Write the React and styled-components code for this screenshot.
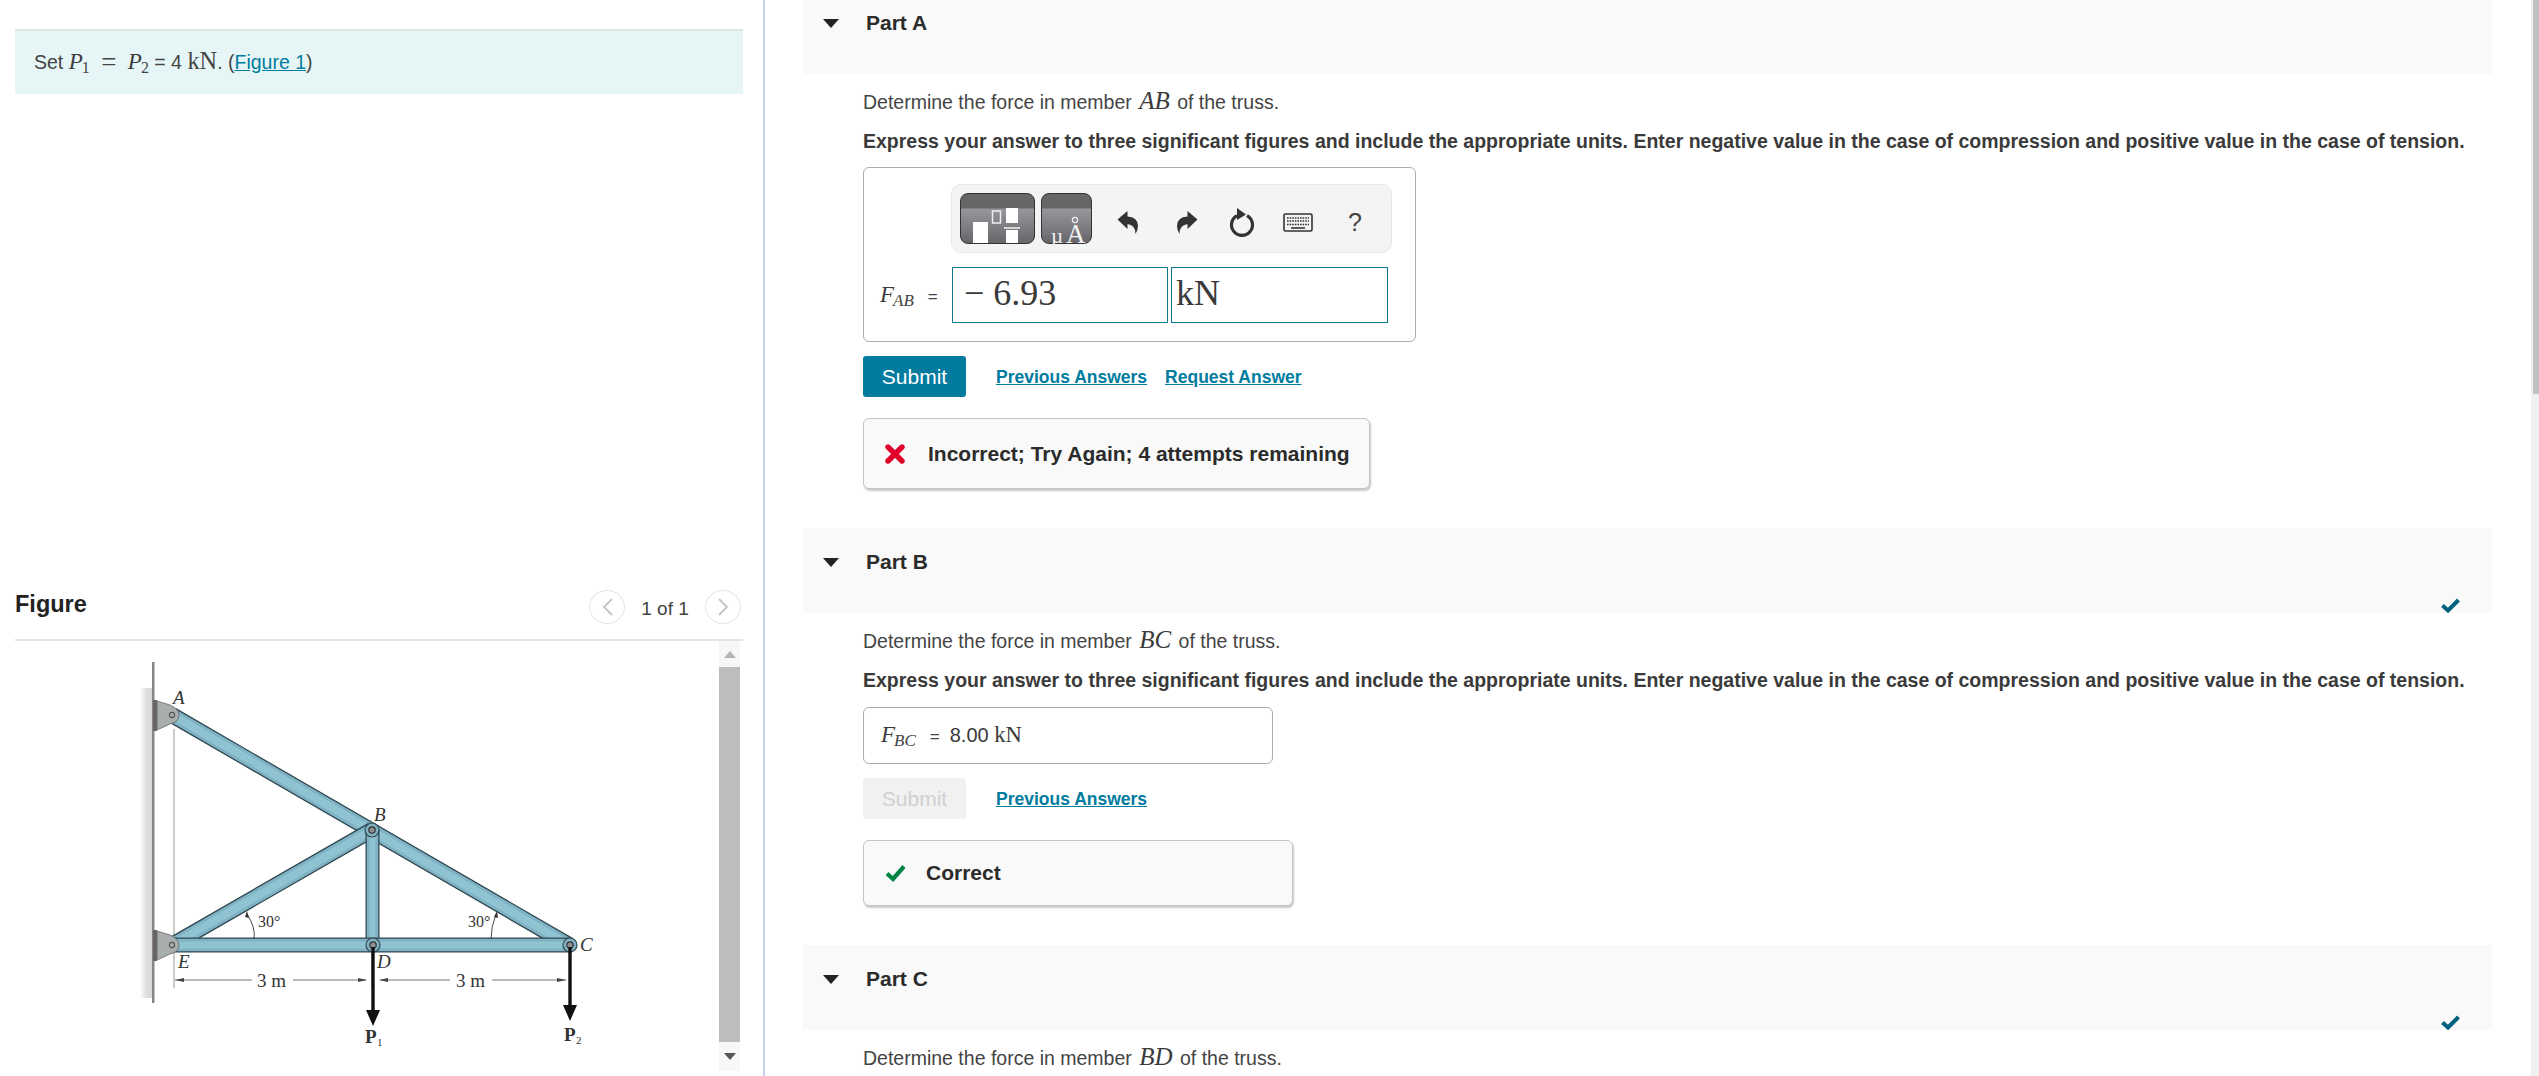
import React from "react";
import styled, { createGlobalStyle } from "styled-components";

const GlobalStyle = createGlobalStyle`
  html, body {
    margin: 0;
    padding: 0;
    background: #fff;
    font-family: "Liberation Sans", Arial, sans-serif;
    color: #3b3b3b;
  }
`;

const PROMPT =
  "Express your answer to three significant figures and include the appropriate units. Enter negative value in the case of compression and positive value in the case of tension.";

const Member = ({ x1, y1, x2, y2, w = 14 }) => (
  <g strokeLinecap="butt">
    <line x1={x1} y1={y1} x2={x2} y2={y2} stroke="#2f4650" strokeWidth={w} />
    <line x1={x1} y1={y1} x2={x2} y2={y2} stroke="#7fb2c2" strokeWidth={w - 2.5} />
    <line x1={x1} y1={y1} x2={x2} y2={y2} stroke="#8fc3d1" strokeWidth={w - 8} />
  </g>
);

const Pin = ({ x, y }) => (
  <g>
    <circle cx={x} cy={y} r="7" fill="#7fb2c2" stroke="#2f4650" strokeWidth="1.2" />
    <circle cx={x} cy={y} r="3.2" fill="#8b8f90" stroke="#333" strokeWidth="1.2" />
  </g>
);

const Plate = ({ y }) => (
  <g>
    <rect x="153" y={y - 15} width="4" height="31" fill="#666" />
    <path
      d={`M157 ${y - 14} L170 ${y - 10} Q179 ${y - 6} 179 ${y} Q179 ${y + 7} 170 ${y + 9} L157 ${y + 15} Z`}
      fill="#a8aeae"
      stroke="#666"
      strokeWidth="0.8"
    />
    <circle cx="172" cy={y} r="2.6" fill="#a8aeae" stroke="#555" strokeWidth="1.1" />
  </g>
);

const Force = ({ x, tip }) => (
  <g>
    <line x1={x} y1="944" x2={x} y2={tip - 12} stroke="#111" strokeWidth="3.4" />
    <polygon points={`${x - 7},${tip - 16} ${x + 7},${tip - 16} ${x},${tip}`} fill="#111" />
  </g>
);

const TickArrow = ({ x1, x2 }) => (
  <line x1={x1} y1="977" x2={x2} y2="977" stroke="#666" strokeWidth="0.9" />
);

const TrussText = styled.text`
  font-family: "Liberation Serif", "Times New Roman", serif;
  font-size: ${(p) => p.$size || 19}px;
  font-style: ${(p) => (p.$upright ? "normal" : "italic")};
  font-weight: ${(p) => (p.$bold ? 700 : 400)};
  fill: #333;
`;

const TrussFigure = () => (
  <FigureSvg viewBox="15 638 704 430" width="704" height="430">
    <defs>
      <linearGradient id="wallShade" x1="0" x2="1" y1="0" y2="0">
        <stop offset="0" stopColor="#fff" />
        <stop offset="0.5" stopColor="#dedede" />
        <stop offset="1" stopColor="#d8d8d8" />
      </linearGradient>
    </defs>
    <rect x="140" y="685" width="12" height="310" fill="url(#wallShade)" />
    <rect x="152" y="659" width="2.5" height="341" fill="#868686" />
    <line x1="174" y1="726" x2="174" y2="985" stroke="#999" strokeWidth="1" />
    <line x1="372" y1="950" x2="372" y2="985" stroke="#999" strokeWidth="1" />

    <Member x1={172} y1={712} x2={569} y2={942} w={16} />
    <Member x1={172} y1={942} x2={372} y2={827} w={16} />
    <Member x1={372.5} y1={827} x2={372.5} y2={942} w={14} />
    <Member x1={172} y1={942} x2={572} y2={942} w={15} />
    <Plate y={712} />
    <Plate y={942} />
    <Pin x={372} y={827} />
    <Pin x={373} y={942} />
    <Pin x={570} y={942} />

    <path d="M247 911 Q256 925 254 936" fill="none" stroke="#333" strokeWidth="0.9" />
    <path d="M491 936 Q491 924 496 911" fill="none" stroke="#333" strokeWidth="0.9" />
    <polygon points="247,908 249,915 245,914" fill="#333" />
    <polygon points="497,908 498,915 494,914" fill="#333" />

    <TickArrow x1={175} x2={252} />
    <TickArrow x1={293} x2={366} />
    <TickArrow x1={380} x2={450} />
    <TickArrow x1={492} x2={566} />
    <polygon points="175,977 184,975 184,979" fill="#444" />
    <polygon points="367,977 358,975 358,979" fill="#444" />
    <polygon points="379,977 388,975 388,979" fill="#444" />
    <polygon points="566,977 557,975 557,979" fill="#444" />

    <Force x={373} tip={1023} />
    <Force x={570} tip={1018} />

    <TrussText x="173" y="701">A</TrussText>
    <TrussText x="374" y="818">B</TrussText>
    <TrussText x="580" y="948">C</TrussText>
    <TrussText x="178" y="965">E</TrussText>
    <TrussText x="377" y="965">D</TrussText>
    <TrussText x="258" y="924" $upright $size={16}>30°</TrussText>
    <TrussText x="468" y="924" $upright $size={16}>30°</TrussText>
    <TrussText x="257" y="984" $upright>3 m</TrussText>
    <TrussText x="456" y="984" $upright>3 m</TrussText>
    <TrussText x="365" y="1040" $upright $bold>P</TrussText>
    <TrussText x="377" y="1043" $upright $size={11}>1</TrussText>
    <TrussText x="564" y="1038" $upright $bold>P</TrussText>
    <TrussText x="576" y="1041" $upright $size={11}>2</TrussText>
  </FigureSvg>
);

const UndoIcon = ({ flip }) => (
  <ToolIcon width="22" height="24" viewBox="0 0 22 24" $flip={flip}>
    <path d="M0.5 9.5 L10.5 1 L10.5 6.5 Q21 7 21 16 Q21 20 18.5 24 Q19 15.5 10.5 14 L10.5 19 Z" fill="#333" />
  </ToolIcon>
);

const ReloadIcon = () => (
  <ToolIcon width="26" height="30" viewBox="0 0 26 30">
    <path d="M8 8.6 A10.5 10.5 0 1 0 18 8.6" fill="none" stroke="#333" strokeWidth="3.2" />
    <polygon points="8,1 17,7.5 8,13" fill="#333" />
  </ToolIcon>
);

const KeyboardIcon = () => (
  <ToolIcon width="30" height="19" viewBox="0 0 30 19">
    <rect x="1" y="1" width="28" height="17" rx="1.5" fill="#f4f4f4" stroke="#333" strokeWidth="1.6" />
    <path d="M4 5h22M4 8h22M4 11.5h22" stroke="#333" strokeWidth="1.7" strokeDasharray="1.6 1" />
    <path d="M8 15h14" stroke="#333" strokeWidth="1.6" />
  </ToolIcon>
);

const TemplateGlyph = () => (
  <svg width="73" height="35" viewBox="0 0 73 35">
    <rect x="12" y="14" width="15" height="21" fill="#fff" />
    <rect x="31.5" y="3" width="8" height="12" fill="none" stroke="#eee" strokeWidth="1.5" />
    <rect x="45" y="0" width="12" height="15" fill="#fff" />
    <rect x="43" y="19" width="16" height="2" fill="#d8d8d8" />
    <rect x="45" y="22" width="12" height="13" fill="#fff" />
  </svg>
);

const UnitGlyph = () => (
  <GlyphSvg width="49" height="35" viewBox="0 0 49 35">
    <GlyphText x="9" y="35" $size={21}>µ</GlyphText>
    <GlyphText x="24" y="35" $size={27}>A</GlyphText>
    <circle cx="33" cy="12" r="2.6" fill="none" stroke="#eee" strokeWidth="1.2" />
  </GlyphSvg>
);

const Chevron = ({ left }) => (
  <svg width="11" height="18" viewBox="0 0 11 18">
    <path d={left ? "M10 1 L2 9 L10 17" : "M1 1 L9 9 L1 17"} fill="none" stroke="#c4c4c4" strokeWidth="1.8" />
  </svg>
);

const CheckSmall = () => (
  <svg width="19" height="15" viewBox="0 0 19 15">
    <path d="M1.5 7.5 L7 12.5 L17.5 2" fill="none" stroke="#00607d" strokeWidth="4" />
  </svg>
);

const CheckGreen = () => (
  <svg width="21" height="18" viewBox="0 0 21 18">
    <path d="M2 9.5 L8 15 L19 2.5" fill="none" stroke="#008545" strokeWidth="4.2" />
  </svg>
);

const CrossRed = () => (
  <svg width="20" height="20" viewBox="0 0 20 20">
    <path d="M3 3 L17 17 M17 3 L3 17" fill="none" stroke="#e1002a" strokeWidth="5.4" strokeLinecap="round" />
  </svg>
);

const Part = ({ name, children, done }) => (
  <Section>
    <PartHeader>
      <Caret />
      <PartTitle>{name}</PartTitle>
      {done && (
        <DoneMark>
          <CheckSmall />
        </DoneMark>
      )}
    </PartHeader>
    <PartBody>{children}</PartBody>
  </Section>
);

export default function App() {
  return (
    <Page>
      <GlobalStyle />
      <LeftColumn>
        <Note>
          Set <MathVar>P</MathVar>
          <MathSub>1</MathSub> <MathEq>=</MathEq> <MathVar>P</MathVar>
          <MathSub>2</MathSub> = 4 <NoteRoman>kN</NoteRoman>. (<NoteLink href="#fig">Figure 1</NoteLink>)
        </Note>
        <FigureHeader>
          <FigureTitle>Figure</FigureTitle>
          <Pager>
            <PagerButton>
              <Chevron left />
            </PagerButton>
            <PagerText>1 of 1</PagerText>
            <PagerButton>
              <Chevron />
            </PagerButton>
          </Pager>
        </FigureHeader>
        <FigureBody>
          <TrussFigure />
          <MiniScroll>
            <ScrollArrow $up />
            <ScrollThumb />
            <ScrollArrow />
          </MiniScroll>
        </FigureBody>
      </LeftColumn>

      <RightColumn>
        <Part name="Part A">
          <Question>
            Determine the force in member <MathBig>AB</MathBig> of the truss.
          </Question>
          <Instruction>{PROMPT}</Instruction>
          <EditorBox>
            <Toolbar>
              <TemplateButton $w={75}>
                <TemplateGlyph />
              </TemplateButton>
              <TemplateButton $w={51} $gap={6}>
                <UnitGlyph />
              </TemplateButton>
              <ToolSlot $w={60} $left={6}>
                <UndoIcon />
              </ToolSlot>
              <ToolSlot $w={58}>
                <UndoIcon flip />
              </ToolSlot>
              <ToolSlot $w={52}>
                <ReloadIcon />
              </ToolSlot>
              <ToolSlot $w={60}>
                <KeyboardIcon />
              </ToolSlot>
              <ToolMark>?</ToolMark>
            </Toolbar>
            <AnswerRow>
              <AnswerLabel>
                <MathVar $size={23}>F</MathVar>
                <LabelSub>AB</LabelSub>
                <LabelEq>=</LabelEq>
              </AnswerLabel>
              <AnswerInput $w={216}>− 6.93</AnswerInput>
              <AnswerInput $w={217} $unit>kN</AnswerInput>
            </AnswerRow>
          </EditorBox>
          <ActionRow>
            <SubmitButton>Submit</SubmitButton>
            <ActionLink href="#prev">Previous Answers</ActionLink>
            <ActionLink href="#req">Request Answer</ActionLink>
          </ActionRow>
          <Feedback $w={507} $h={71}>
            <FeedbackIcon $w={43}>
              <CrossRed />
            </FeedbackIcon>
            <FeedbackText>Incorrect; Try Again; 4 attempts remaining</FeedbackText>
          </Feedback>
        </Part>

        <Part name="Part B" done>
          <Question>
            Determine the force in member <MathBig>BC</MathBig> of the truss.
          </Question>
          <Instruction>{PROMPT}</Instruction>
          <ResultBox>
            <MathVar $size={23}>F</MathVar>
            <LabelSub>BC</LabelSub>
            <LabelEq>=</LabelEq>
            <ResultValue>
              8.00 <MathRoman>kN</MathRoman>
            </ResultValue>
          </ResultBox>
          <ActionRow>
            <SubmitButton disabled>Submit</SubmitButton>
            <ActionLink href="#prev">Previous Answers</ActionLink>
          </ActionRow>
          <Feedback $w={430} $h={66}>
            <FeedbackIcon $w={41}>
              <CheckGreen />
            </FeedbackIcon>
            <FeedbackText>Correct</FeedbackText>
          </Feedback>
        </Part>

        <Part name="Part C" done>
          <Question>
            Determine the force in member <MathBig>BD</MathBig> of the truss.
          </Question>
        </Part>
      </RightColumn>

      <PageScroll>
        <PageThumb />
      </PageScroll>
    </Page>
  );
}

const Page = styled.div`
  position: relative;
  display: flex;
  width: 2539px;
  height: 1076px;
  overflow: hidden;
`;

const LeftColumn = styled.div`
  width: 763px;
  flex: none;
  box-sizing: content-box;
  border-right: 2px solid #c3d2e6;
  padding-top: 29px;
  display: flex;
  flex-direction: column;
`;

const Note = styled.div`
  margin-left: 15px;
  width: 728px;
  height: 65px;
  box-sizing: border-box;
  border-top: 2px solid #dfe3e3;
  background: #e6f6f7;
  padding: 0 0 0 19px;
  line-height: 62px;
  font-size: 19.5px;
  color: #444;
`;

const MathVar = styled.i`
  font-family: "Liberation Serif", "Times New Roman", serif;
  font-size: ${(p) => p.$size || 23}px;
  color: #3b3b3b;
`;

const MathSub = styled.sub`
  font-family: "Liberation Serif", "Times New Roman", serif;
  font-size: 16px;
  line-height: 0;
  margin-left: -1px;
  vertical-align: -4px;
`;

const MathEq = styled.span`
  font-family: "Liberation Serif", "Times New Roman", serif;
  font-size: 27px;
  line-height: 0;
  padding: 0 6px;
  position: relative;
  top: 2px;
`;

const MathRoman = styled.span`
  font-family: "Liberation Serif", "Times New Roman", serif;
  font-size: 1.13em;
`;

const NoteRoman = styled.span`
  font-family: "Liberation Serif", "Times New Roman", serif;
  font-size: 1.25em;
  line-height: 0;
`;

const NoteLink = styled.a`
  color: #007c9e;
  text-decoration: underline;
`;

const FigureHeader = styled.div`
  margin: 495px 0 0 15px;
  width: 728px;
  box-sizing: border-box;
  padding-bottom: 14px;
  border-bottom: 2px solid #e2e4e6;
  display: flex;
  justify-content: space-between;
  align-items: flex-start;
`;

const FigureTitle = styled.div`
  font-size: 23.5px;
  font-weight: 700;
  line-height: 30px;
  color: #222;
`;

const Pager = styled.div`
  display: flex;
  align-items: center;
  height: 36px;
  margin-right: 2px;
`;

const PagerButton = styled.div`
  width: 36px;
  height: 34px;
  box-sizing: border-box;
  border: 1px solid #e6e6e6;
  border-radius: 50%;
  display: flex;
  align-items: center;
  justify-content: center;
`;

const PagerText = styled.div`
  width: 80px;
  text-align: center;
  font-size: 19px;
  padding-top: 4px;
  color: #444;
`;

const FigureBody = styled.div`
  margin-left: 15px;
  display: flex;
  height: 430px;
`;

const FigureSvg = styled.svg`
  display: block;
  flex: none;
`;

const MiniScroll = styled.div`
  width: 21px;
  display: flex;
  flex-direction: column;
  background: #f7f7f7;
`;

const ScrollArrow = styled.div`
  flex: ${(p) => (p.$up ? "0 0 26px" : "1")};
  display: flex;
  align-items: center;
  justify-content: center;

  &::before {
    content: "";
    border-left: 6px solid transparent;
    border-right: 6px solid transparent;
    ${(p) => (p.$up ? "border-bottom: 7px solid #b5b5b5;" : "border-top: 7px solid #555;")}
  }
`;

const ScrollThumb = styled.div`
  flex: 0 0 375px;
  background: #bdbdbd;
`;

const RightColumn = styled.div`
  flex: 1;
  min-width: 0;
  margin-top: -11px;
  padding: 0 47px 0 38px;
`;

const Section = styled.section`
  margin-bottom: 39px;
`;

const PartHeader = styled.div`
  position: relative;
  height: 85px;
  background: #f9f9f9;
  display: flex;
  align-items: flex-start;
  padding: 22px 0 0 20px;
  box-sizing: border-box;
`;

const Caret = styled.div`
  width: 0;
  height: 0;
  margin-top: 8px;
  border-left: 8px solid transparent;
  border-right: 8px solid transparent;
  border-top: 9px solid #222;
`;

const PartTitle = styled.div`
  margin-left: 27px;
  font-size: 21px;
  font-weight: 700;
  line-height: 24px;
  color: #2b2b2b;
`;

const DoneMark = styled.div`
  position: absolute;
  right: 32px;
  bottom: 0;
  line-height: 0;
`;

const PartBody = styled.div`
  padding-left: 60px;
`;

const Question = styled.div`
  margin-top: 16px;
  height: 24px;
  font-size: 19.5px;
  line-height: 24px;
  color: #444;
`;

const MathBig = styled.i`
  font-family: "Liberation Serif", "Times New Roman", serif;
  font-size: 25px;
  line-height: 0;
  padding: 0 2px;
  color: #3b3b3b;
`;

const Instruction = styled.div`
  margin-top: 15px;
  font-size: 19.5px;
  font-weight: 700;
  line-height: 24px;
  color: #3a3a3a;
  white-space: nowrap;
`;

const EditorBox = styled.div`
  margin-top: 14px;
  width: 553px;
  height: 175px;
  box-sizing: border-box;
  border: 1px solid #adadad;
  border-radius: 6px;
  padding: 16px 0 0 16px;
`;

const Toolbar = styled.div`
  margin-left: 71px;
  width: 441px;
  height: 69px;
  box-sizing: border-box;
  background: #f4f4f4;
  border: 1px solid #e8e8e8;
  border-radius: 10px;
  padding: 8px 0 0 8px;
  display: flex;
  align-items: flex-start;
`;

const TemplateButton = styled.div`
  width: ${(p) => p.$w}px;
  height: 51px;
  flex: none;
  margin-left: ${(p) => p.$gap || 0}px;
  box-sizing: border-box;
  border: 1px solid #333;
  border-radius: 8px;
  background: linear-gradient(#666 0, #666 14px, #96969c 15px, #66666a 100%);
  padding-top: 14px;
  line-height: 0;
`;

const GlyphSvg = styled.svg`
  overflow: visible;
`;

const GlyphText = styled.text`
  font-family: "Liberation Serif", "Times New Roman", serif;
  font-size: ${(p) => p.$size}px;
  fill: #f2f2f2;
`;

const ToolSlot = styled.div`
  width: ${(p) => p.$w}px;
  height: 51px;
  box-sizing: border-box;
  padding-top: 7px;
  flex: none;
  margin-left: ${(p) => p.$left || 0}px;
  display: flex;
  align-items: center;
  justify-content: center;
`;

const ToolIcon = styled.svg`
  display: block;
  ${(p) => (p.$flip ? "transform: scaleX(-1);" : "")}
`;

const ToolMark = styled.div`
  width: 54px;
  height: 51px;
  text-align: center;
  font-size: 25px;
  line-height: 58px;
  color: #444;
`;

const AnswerRow = styled.div`
  margin-top: 14px;
  display: flex;
  align-items: stretch;
  gap: 3px;
`;

const AnswerLabel = styled.div`
  width: 69px;
  display: flex;
  align-items: baseline;
  line-height: 56px;
`;

const LabelSub = styled.i`
  font-family: "Liberation Serif", "Times New Roman", serif;
  font-size: 17px;
  position: relative;
  top: 4px;
  margin-left: -1px;
  color: #444;
`;

const LabelEq = styled.span`
  font-size: 17px;
  margin-left: 14px;
  color: #444;
`;

const AnswerInput = styled.div`
  width: ${(p) => p.$w}px;
  height: 56px;
  box-sizing: border-box;
  border: 1px solid #0a7a94;
  padding-left: ${(p) => (p.$unit ? 4 : 11)}px;
  font-family: "Liberation Serif", "Times New Roman", serif;
  font-size: 36px;
  line-height: 50px;
  color: #3a3a3a;
`;

const ActionRow = styled.div`
  margin-top: 14px;
  display: flex;
  align-items: center;
  height: 41px;
`;

const SubmitButton = styled.div`
  width: 103px;
  height: 41px;
  border-radius: 3px;
  background: ${(p) => (p.disabled ? "#f1f1f1" : "#037b9f")};
  color: ${(p) => (p.disabled ? "#d0d0d0" : "#fff")};
  font-size: 21px;
  line-height: 41px;
  text-align: center;
  margin-right: 12px;
`;

const ActionLink = styled.a`
  margin: 1px 0 0 18px;
  font-size: 17.5px;
  font-weight: 700;
  color: #007c9e;
  text-decoration: underline;
`;

const Feedback = styled.div`
  margin-top: 21px;
  width: ${(p) => p.$w}px;
  height: ${(p) => p.$h}px;
  box-sizing: border-box;
  border: 1px solid #c4c4c4;
  border-radius: 6px;
  background: #f9f9f9;
  box-shadow: 1px 2px 2px rgba(0, 0, 0, 0.22);
  display: flex;
  align-items: center;
  padding-left: 21px;
`;

const FeedbackIcon = styled.div`
  width: ${(p) => p.$w}px;
  flex: none;
  line-height: 0;
`;

const FeedbackText = styled.div`
  font-size: 21px;
  font-weight: 700;
  color: #2b2b2b;
`;

const ResultBox = styled.div`
  margin-top: 15px;
  width: 410px;
  height: 57px;
  box-sizing: border-box;
  border: 1px solid #adadad;
  border-radius: 6px;
  padding-left: 17px;
  display: flex;
  align-items: baseline;
  line-height: 54px;
`;

const ResultValue = styled.span`
  margin-left: 10px;
  font-size: 20px;
  font-family: "Liberation Sans", Arial, sans-serif;
  color: #3a3a3a;
`;

const PageScroll = styled.div`
  position: absolute;
  top: 0;
  right: 0;
  width: 8px;
  height: 100%;
  background: #f0f0f0;
`;

const PageThumb = styled.div`
  margin-left: 2px;
  height: 394px;
  background: #bfbfbf;
`;
